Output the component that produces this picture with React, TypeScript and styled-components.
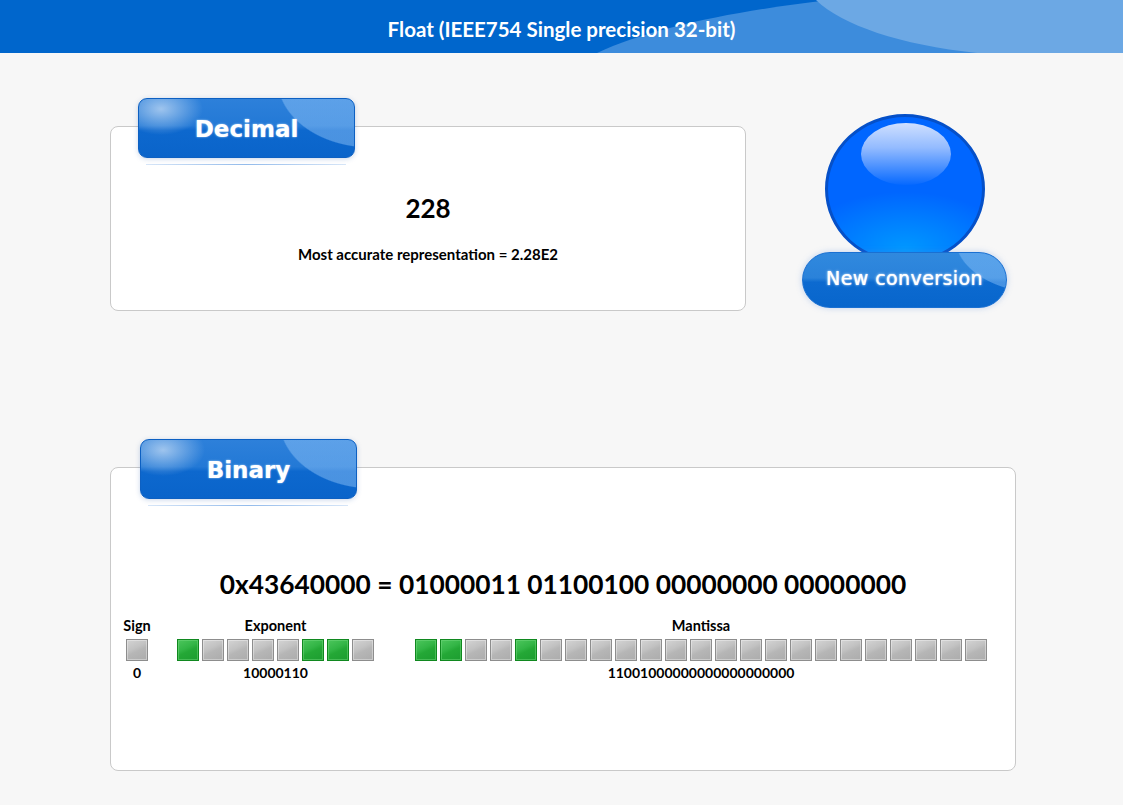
import React from "react";
import styled, {createGlobalStyle, css} from "styled-components";

const GlobalStyle = createGlobalStyle`
    html, body {
        margin: 0;
        padding: 0;
        background: #f7f7f7;
    }

    body {
        font-family: "Lato", "Open Sans", sans-serif;
        color: #000;
    }
`;

const Header = styled.header`
    position: relative;
    height: 53px;
    background: #0066cc;
    overflow: hidden;
    display: flex;
    align-items: center;
    justify-content: center;

    svg {
        position: absolute;
        inset: 0;
        width: 100%;
        height: 100%;
    }
`;

const Title = styled.h1`
    position: relative;
    margin: 0;
    color: #fff;
    font-size: 20.5px;
    font-weight: 700;
    padding-top: 4px;
`;

const Main = styled.main`
    padding: 45px 0 0 110px;
`;

const TopRow = styled.div`
    display: flex;
    align-items: flex-start;
`;

const Section = styled.section<{ $width: number; $gap?: number }>`
    display: flex;
    flex-direction: column;
    width: ${p => p.$width}px;
    margin-top: ${p => p.$gap || 0}px;
`;

const Tab = styled.div<{ $offset: number }>`
    position: relative;
    z-index: 1;
    box-sizing: border-box;
    width: 217px;
    height: 60px;
    margin: 0 0 -32px ${p => p.$offset}px;
    border: 1px solid #0d60c2;
    border-radius: 9px;
    background:
        radial-gradient(ellipse 42px 26px at 22px 10px, rgba(255, 255, 255, 0.55), rgba(255, 255, 255, 0) 100%),
        radial-gradient(ellipse 150px 110px at 108% -35%, rgba(150, 200, 250, 0.45) 0 62%, rgba(150, 200, 250, 0) 63%),
        linear-gradient(#2d80da 0%, #2379d6 46%, #0d68ce 54%, #0a64ca 100%);
    box-shadow: 0 1px 5px rgba(40, 90, 170, 0.25);
    display: flex;
    align-items: center;
    justify-content: center;
    color: #fff;
    font-family: "DejaVu Sans", sans-serif;
    font-weight: 700;
    font-size: 23px;
    text-shadow: 0 0 2px rgba(210, 235, 255, 0.9);
    padding-top: 2px;

    &::after {
        content: "";
        position: absolute;
        left: 7px;
        right: 8px;
        bottom: -8px;
        height: 1px;
        background: linear-gradient(90deg, rgba(120, 170, 230, 0.3), rgba(120, 170, 230, 0.8), rgba(120, 170, 230, 0.3));
    }
`;

const Card = styled.div<{ $height: number; $top: number }>`
    box-sizing: border-box;
    height: ${p => p.$height}px;
    padding-top: ${p => p.$top}px;
    background: #fff;
    border: 1px solid #c9c9c9;
    border-radius: 8px;
    display: flex;
    flex-direction: column;
    align-items: center;
`;

const BigValue = styled.div`
    font-size: 26px;
    line-height: 32px;
    font-weight: 700;
`;

const Representation = styled.div`
    margin-top: 21px;
    font-size: 15px;
    line-height: 18px;
    font-weight: 700;
`;

const ButtonColumn = styled.div`
    display: flex;
    flex-direction: column;
    align-items: center;
    width: 205px;
    margin: 16px 0 0 56px;
    cursor: pointer;
`;

const Ball = styled.div`
    position: relative;
    box-sizing: border-box;
    width: 160px;
    height: 150px;
    border-radius: 50%;
    border: 3px solid #0550c8;
    background: radial-gradient(ellipse 70% 40% at 50% 92%, #0098ff 0%, #0082ff 45%, rgba(0, 110, 255, 0) 100%),
        #0066ff;

    &::before {
        content: "";
        position: absolute;
        top: 6px;
        left: 33px;
        width: 90px;
        height: 62px;
        border-radius: 50%;
        background: linear-gradient(#cfe0ff 0%, #93bbff 40%, rgba(40, 120, 255, 0.15) 100%);
    }
`;

const Pill = styled.div`
    position: relative;
    z-index: 1;
    box-sizing: border-box;
    width: 205px;
    height: 56px;
    margin-top: -12px;
    border-radius: 28px;
    border: 1px solid #1a70d2;
    background:
        radial-gradient(ellipse 140px 90px at 118% -30%, rgba(140, 195, 250, 0.45) 0 62%, rgba(140, 195, 250, 0) 63%),
        linear-gradient(#3089de 0%, #2a82da 46%, #0c6ad0 54%, #0866cc 100%);
    box-shadow: 0 0 6px rgba(90, 140, 220, 0.35);
    display: flex;
    align-items: center;
    justify-content: center;
    color: #fff;
    font-family: "DejaVu Sans", sans-serif;
    font-weight: 400;
    font-size: 19px;
    letter-spacing: 0.4px;
    text-shadow: 0 0 1px #fff, 0 0 3px rgba(210, 235, 255, 0.9);
    padding-bottom: 5px;
`;

const HexLine = styled.div`
    font-size: 26.3px;
    line-height: 32px;
    font-weight: 700;
`;

const BitsRow = styled.div`
    align-self: stretch;
    display: flex;
    align-items: flex-start;
    margin-top: 17px;
    padding-left: 15px;
`;

const BitGroup = styled.div<{ $gap: number }>`
    display: flex;
    flex-direction: column;
    align-items: center;
    margin-left: ${p => p.$gap}px;
    font-weight: 700;
    white-space: nowrap;
`;

const BitLabel = styled.div`
    width: 0;
    display: flex;
    justify-content: center;
    font-size: 14.5px;
    line-height: 17px;
`;

const BitValue = styled(BitLabel)`
    font-size: 14px;
`;

const Boxes = styled.div`
    display: flex;
    gap: 3px;
    margin: 5px 0 3px;
`;

const Bit = styled.div<{ $on: boolean }>`
    box-sizing: border-box;
    width: 22px;
    height: 22px;
    ${p => p.$on ? css`
        border: 1px solid #10881f;
        background: linear-gradient(155deg, #4cc65c 0%, #33b546 40%, #24a836 55%, #1d9d30 100%);
        box-shadow: inset 0 0 0 1px rgba(120, 220, 130, 0.45);
    ` : css`
        border: 1px solid #8d8d8d;
        background: linear-gradient(155deg, #d4d4d4 0%, #c2c2c2 40%, #b6b6b6 55%, #acacac 100%);
        box-shadow: inset 0 0 0 1px rgba(255, 255, 255, 0.35);
    `}
`;

const sign = "0";
const exponent = "10000110";
const mantissa = "11001000000000000000000";

function BitField({label, bits, gap}: { label: string; bits: string; gap: number }) {
    return (
        <BitGroup $gap={gap}>
            <BitLabel>{label}</BitLabel>
            <Boxes>
                {bits.split("").map((b, i) => <Bit key={i} $on={b === "1"}/>)}
            </Boxes>
            <BitValue>{bits}</BitValue>
        </BitGroup>
    );
}

export default function App() {
    return (
        <>
            <GlobalStyle/>
            <Header>
                <svg viewBox="0 0 1123 53" preserveAspectRatio="none">
                    <path d="M597 53 C650 28 740 10 830 0 L1123 0 L1123 53 Z" fill="#3d8cdc"/>
                    <path d="M816 0 C842 25 900 45 977 53 L1123 53 L1123 0 Z" fill="#6ca8e4"/>
                </svg>
                <Title>Float (IEEE754 Single precision 32-bit)</Title>
            </Header>
            <Main>
                <TopRow>
                    <Section $width={636}>
                        <Tab $offset={28}>Decimal</Tab>
                        <Card $height={185} $top={65}>
                            <BigValue>228</BigValue>
                            <Representation>Most accurate representation = 2.28E2</Representation>
                        </Card>
                    </Section>
                    <ButtonColumn>
                        <Ball/>
                        <Pill>New conversion</Pill>
                    </ButtonColumn>
                </TopRow>
                <Section $width={906} $gap={128}>
                    <Tab $offset={30}>Binary</Tab>
                    <Card $height={304} $top={100}>
                        <HexLine>0x43640000 = 01000011 01100100 00000000 00000000</HexLine>
                        <BitsRow>
                            <BitField label="Sign" bits={sign} gap={0}/>
                            <BitField label="Exponent" bits={exponent} gap={29}/>
                            <BitField label="Mantissa" bits={mantissa} gap={41}/>
                        </BitsRow>
                    </Card>
                </Section>
            </Main>
        </>
    );
}
